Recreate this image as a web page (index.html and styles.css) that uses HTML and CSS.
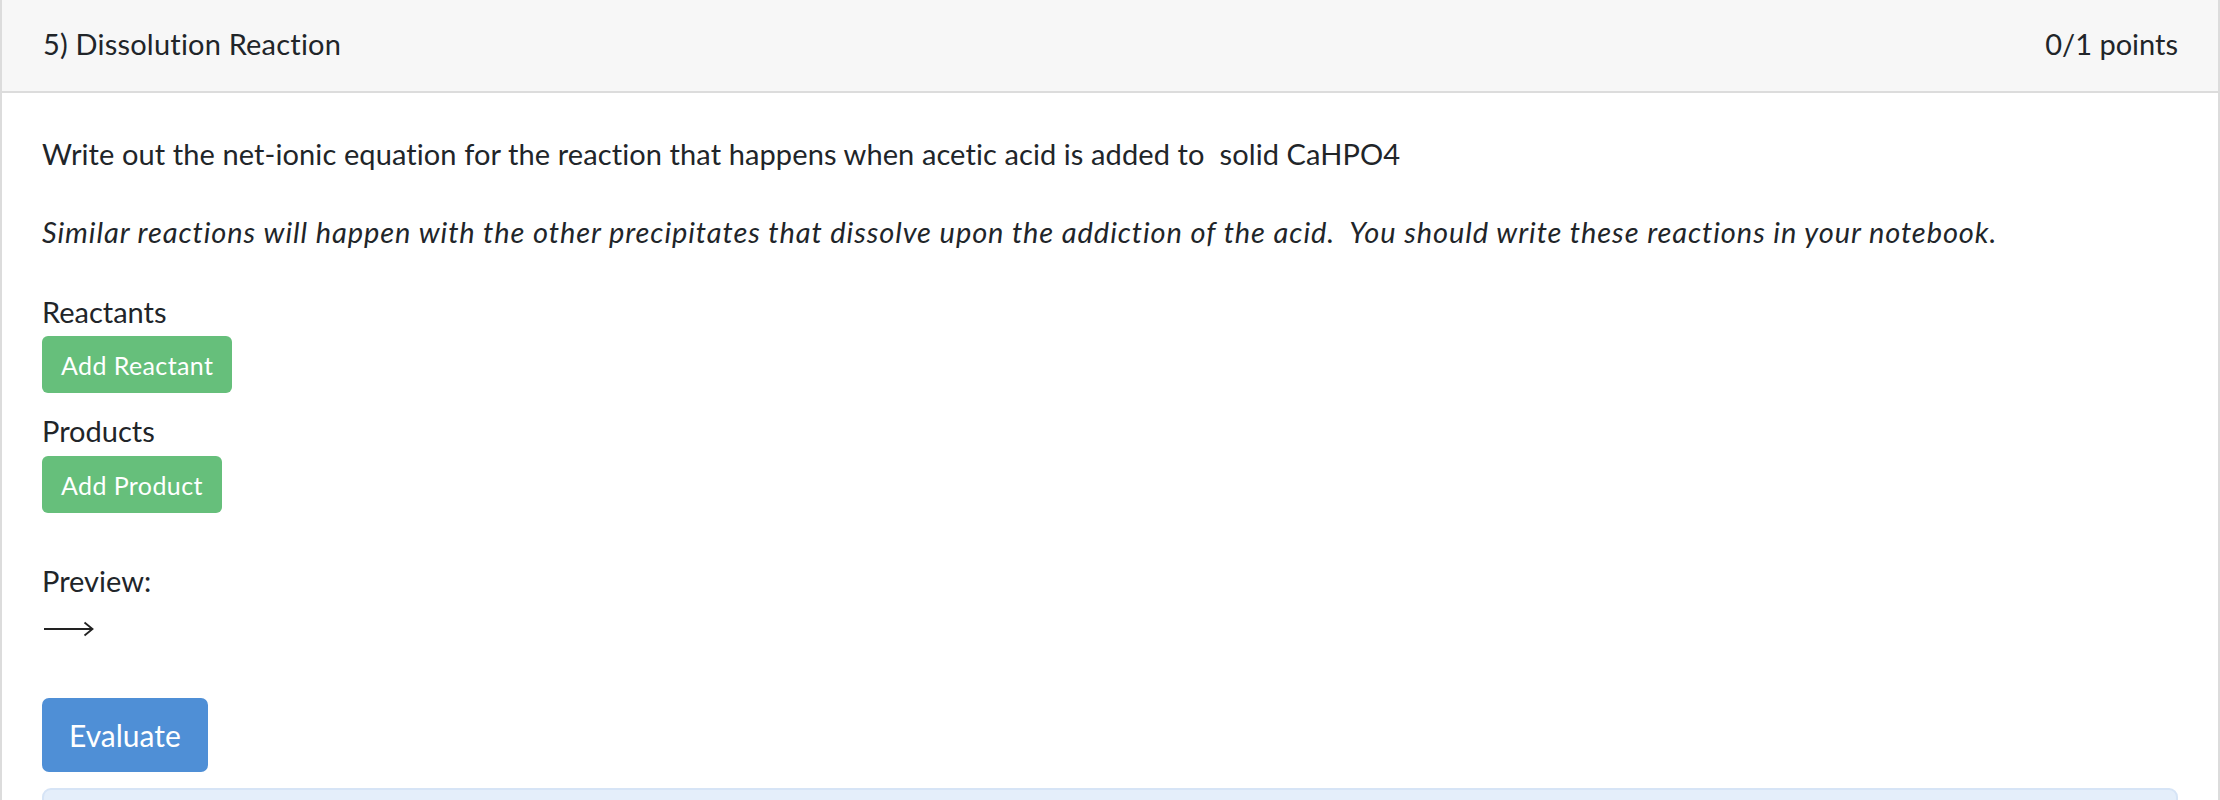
FILE: index.html
```html
<!DOCTYPE html>
<html lang="en">
<head>
<meta charset="utf-8">
<title>Dissolution Reaction</title>
<link rel="stylesheet" href="styles.css">
</head>
<body>
<div class="card">
  <div class="card-header">
    <span class="title">5) Dissolution Reaction</span>
    <span class="points">0/1 points</span>
  </div>
  <div class="card-body">
    <p class="q">Write out the net-ionic equation for the reaction that happens when acetic acid is added to &nbsp;solid CaHPO4</p>
    <p class="q note"><em>Similar reactions will happen with the other precipitates that dissolve upon the addiction of the acid.&nbsp; You should write these reactions in your notebook.</em></p>
    <div class="label reactants">Reactants</div>
    <button class="btn btn-green">Add Reactant</button>
    <div class="label products">Products</div>
    <button class="btn btn-green">Add Product</button>
    <div class="label preview">Preview:</div>
    <div class="arrow-row">
      <svg class="arrow" width="52" height="16" viewBox="0 0 52 16" aria-label="long right arrow">
        <path d="M1 8 H49" stroke="#222" stroke-width="2" fill="none"/>
        <path d="M41.5 1.5 L49.5 8 L41.5 14.5" stroke="#222" stroke-width="1.8" fill="none" stroke-linejoin="miter"/>
      </svg>
    </div>
    <button class="btn btn-blue">Evaluate</button>
    <div class="alert"></div>
  </div>
</div>
</body>
</html>
```
FILE: styles.css
```css
html, body {
  margin: 0;
  padding: 0;
  background: #ffffff;
}
body {
  font-family: Lato, "Noto Sans", "Liberation Sans", sans-serif;
  font-variant-ligatures: none;
  color: #212529;
  overflow: hidden;
}
.card {
  border-left: 2px solid #dcdcdc;
  border-right: 2px solid #dcdcdc;
  height: 800px;
  box-sizing: border-box;
}
.card-header {
  height: 87px;
  background: #f7f7f7;
  border-bottom: 2px solid #dcdcdc;
  display: flex;
  justify-content: space-between;
  align-items: center;
  padding: 0 40px 4px 41px;
  box-sizing: content-box;
  font-size: 29px;
  line-height: 42px;
}
.title {
  letter-spacing: 0.2px;
}
.card-body {
  padding: 40px 40px 0 40px;
}
.q {
  margin: 0 0 36px 0;
  font-size: 29px;
  line-height: 42px;
  letter-spacing: 0.1px;
}
.q.note {
  margin-bottom: 38px;
  letter-spacing: 0.92px;
}
.label {
  font-size: 29px;
  line-height: 42px;
  margin-bottom: 3px;
}
.products {
  margin-top: 17px;
  margin-bottom: 4px;
}
.preview {
  margin-top: 47px;
  margin-bottom: 0;
}
.arrow-row {
  height: 42px;
  display: flex;
  align-items: center;
  margin-bottom: 54px;
}
.arrow {
  display: block;
  margin-left: 1px;
  margin-top: 12px;
}
.btn {
  display: block;
  border: none;
  border-radius: 6px;
  color: #ffffff;
  font-family: Lato, "Noto Sans", "Liberation Sans", sans-serif;
  font-variant-ligatures: none;
  cursor: pointer;
}
.btn-green {
  background: #66bf7b;
  height: 57px;
  padding: 0 19px;
  font-size: 25px;
  letter-spacing: 0.4px;
}
.btn-blue {
  background: #4f8fd6;
  height: 74px;
  padding: 0 27px;
  font-size: 30px;
  border-radius: 7px;
}
.alert {
  margin-top: 16px;
  height: 60px;
  background: #e4eefa;
  border: 2px solid #d6e4f6;
  border-radius: 9px;
}
```
